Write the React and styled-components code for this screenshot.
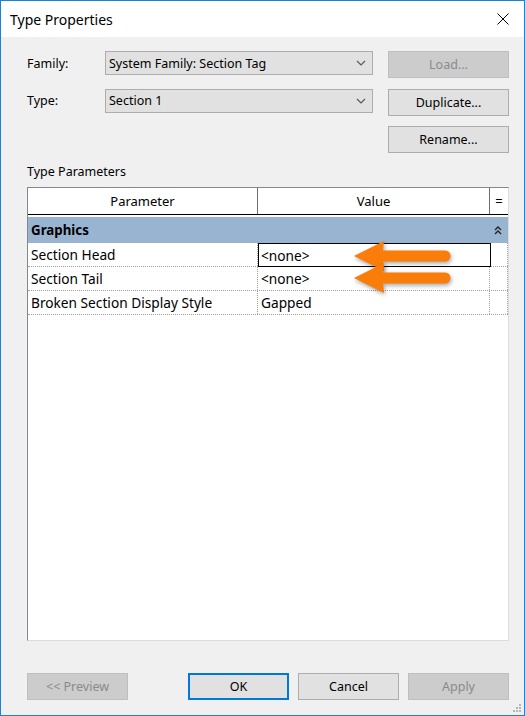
import styled, { createGlobalStyle, css } from "styled-components";

const GlobalStyle = createGlobalStyle`
  html, body {
    margin: 0;
    padding: 0;
    background: #ffffff;
  }
  body {
    font-family: "Noto Sans", "Open Sans", sans-serif;
    font-size: 12.5px;
    color: #000;
  }
`;

const Window = styled.div`
  width: 525px;
  height: 716px;
  box-sizing: border-box;
  border: 1px solid #1883d7;
  background: #f0f0f0;
  display: flex;
  flex-direction: column;
  position: relative;
`;

const TitleBar = styled.div`
  height: 36px;
  background: #ffffff;
  display: flex;
  align-items: center;
  justify-content: space-between;
  padding: 0 15px 0 9px;
  font-size: 14px;
`;

const Body = styled.div`
  flex: 1;
  display: flex;
  flex-direction: column;
  padding: 14px 15px 15px 26px;
  min-height: 0;
`;

const Form = styled.div`
  display: grid;
  grid-template-columns: 78px 1fr 121px;
  grid-auto-rows: 27px;
  row-gap: 10.5px;
  align-items: start;
`;

const Label = styled.div`
  height: 24px;
  display: flex;
  align-items: center;
`;

const Combo = styled.div`
  height: 24px;
  margin-right: 15px;
  box-sizing: border-box;
  background: #e1e1e1;
  border: 1px solid #adadad;
  display: flex;
  align-items: center;
  justify-content: space-between;
  padding: 0 6px 0 3px;
`;

const Button = styled.div`
  height: 27px;
  box-sizing: border-box;
  display: flex;
  align-items: center;
  justify-content: center;
  background: #e1e1e1;
  border: 1px solid #adadad;
  color: #000;
  ${(p) =>
    p.$disabled &&
    css`
      background: #cccccc;
      border-color: #bfbfbf;
      color: #8a8a8a;
    `}
  ${(p) =>
    p.$default &&
    css`
      border: 2px solid #0078d7;
    `}
`;

const SectionLabel = styled.div`
  margin-top: 9px;
  height: 18px;
  display: flex;
  align-items: center;
`;

const Table = styled.div`
  margin-top: 7px;
  flex: 1;
  position: relative;
  background: #ffffff;
  border: 1px solid #828790;
  border-right-color: #dcdcdc;
  border-bottom-color: #dcdcdc;
  display: flex;
  flex-direction: column;
  min-height: 0;
`;

const HeadRow = styled.div`
  display: grid;
  grid-template-columns: 230px 232px 1fr;
  height: 26px;
  border-bottom: 1px solid #000;
`;

const HeadCell = styled.div`
  display: flex;
  align-items: center;
  justify-content: center;
  border-right: 1px solid #6d6d6d;
  font-size: 13px;
  &:last-child {
    border-right: none;
  }
`;

const GroupRow = styled.div`
  margin-top: 2px;
  height: 26px;
  background: #99b4d1;
  display: flex;
  align-items: center;
  justify-content: space-between;
  padding: 0 6px 0 3px;
  font-weight: bold;
  font-size: 13.3px;
`;

const Row = styled.div`
  display: grid;
  grid-template-columns: 230px 232px 1fr;
  height: 23px;
  border-bottom: 1px dotted #a0a0a0;
`;

const Cell = styled.div`
  display: flex;
  align-items: center;
  padding-left: 3px;
  box-sizing: border-box;
  border-right: 1px dotted #a0a0a0;
  font-size: 13.7px;
  ${(p) =>
    p.$selected &&
    css`
      border: 1px solid #000;
      margin: 0 -1px -1px 0;
      padding-left: 2px;
    `}
`;

const Arrow = styled.svg`
  position: absolute;
  left: 324px;
  filter: drop-shadow(1px 2px 2px rgba(0, 0, 0, 0.35));
`;

const FooterRow = styled.div`
  margin-top: 32px;
  display: flex;
  align-items: center;
  gap: 9px;
`;

const Spacer = styled.div`
  flex: 1;
`;

const FooterButton = styled(Button)`
  width: 101px;
`;

const Grip = styled.svg`
  position: absolute;
  right: 2px;
  bottom: 2px;
`;

const Chevron = () => (
  <svg width="10" height="6" viewBox="0 0 10 6">
    <path d="M1 1 L5 5 L9 1" fill="none" stroke="#5a5a5a" strokeWidth="1.2" />
  </svg>
);

const OrangeArrow = ({ top }) => (
  <Arrow style={{ top }} width="106" height="34" viewBox="0 0 106 34">
    <path
      d="M2 16 L32 1 L31 10.5 L93 10.5 A5.5 5.5 0 0 1 93 21.5 L31 21.5 L32 31 Z"
      fill="#fa7d09"
    />
  </Arrow>
);

export default function App() {
  return (
    <>
      <GlobalStyle />
      <Window>
        <TitleBar>
          <span>Type Properties</span>
          <svg width="12" height="12" viewBox="0 0 12 12">
            <path d="M0.5 0.5 L11.5 11.5 M11.5 0.5 L0.5 11.5" stroke="#000" strokeWidth="1" />
          </svg>
        </TitleBar>
        <Body>
          <Form>
            <Label>Family:</Label>
            <Combo>
              <span>System Family: Section Tag</span>
              <Chevron />
            </Combo>
            <Button $disabled>Load...</Button>
            <Label>Type:</Label>
            <Combo>
              <span>Section 1</span>
              <Chevron />
            </Combo>
            <Button>Duplicate...</Button>
            <span />
            <span />
            <Button>Rename...</Button>
          </Form>
          <SectionLabel>Type Parameters</SectionLabel>
          <Table>
            <HeadRow>
              <HeadCell>Parameter</HeadCell>
              <HeadCell>Value</HeadCell>
              <HeadCell>=</HeadCell>
            </HeadRow>
            <GroupRow>
              <span>Graphics</span>
              <svg width="8" height="9" viewBox="0 0 8 9">
                <path d="M1 4 L4 1 L7 4 M1 8 L4 5 L7 8" fill="none" stroke="#222" strokeWidth="1.3" />
              </svg>
            </GroupRow>
            <Row>
              <Cell>Section Head</Cell>
              <Cell $selected>&lt;none&gt;</Cell>
              <Cell />
            </Row>
            <Row>
              <Cell>Section Tail</Cell>
              <Cell>&lt;none&gt;</Cell>
              <Cell />
            </Row>
            <Row>
              <Cell>Broken Section Display Style</Cell>
              <Cell>Gapped</Cell>
              <Cell />
            </Row>
            <OrangeArrow top={52} />
            <OrangeArrow top={74} />
          </Table>
          <FooterRow>
            <FooterButton $disabled>&lt;&lt; Preview</FooterButton>
            <Spacer />
            <FooterButton $default>OK</FooterButton>
            <FooterButton>Cancel</FooterButton>
            <FooterButton $disabled>Apply</FooterButton>
          </FooterRow>
        </Body>
        <Grip width="10" height="10" viewBox="0 0 10 10">
          <g fill="#b5b5b5">
            <rect x="7" y="1" width="2" height="2" />
            <rect x="4" y="4" width="2" height="2" />
            <rect x="7" y="4" width="2" height="2" />
            <rect x="1" y="7" width="2" height="2" />
            <rect x="4" y="7" width="2" height="2" />
            <rect x="7" y="7" width="2" height="2" />
          </g>
        </Grip>
      </Window>
    </>
  );
}
